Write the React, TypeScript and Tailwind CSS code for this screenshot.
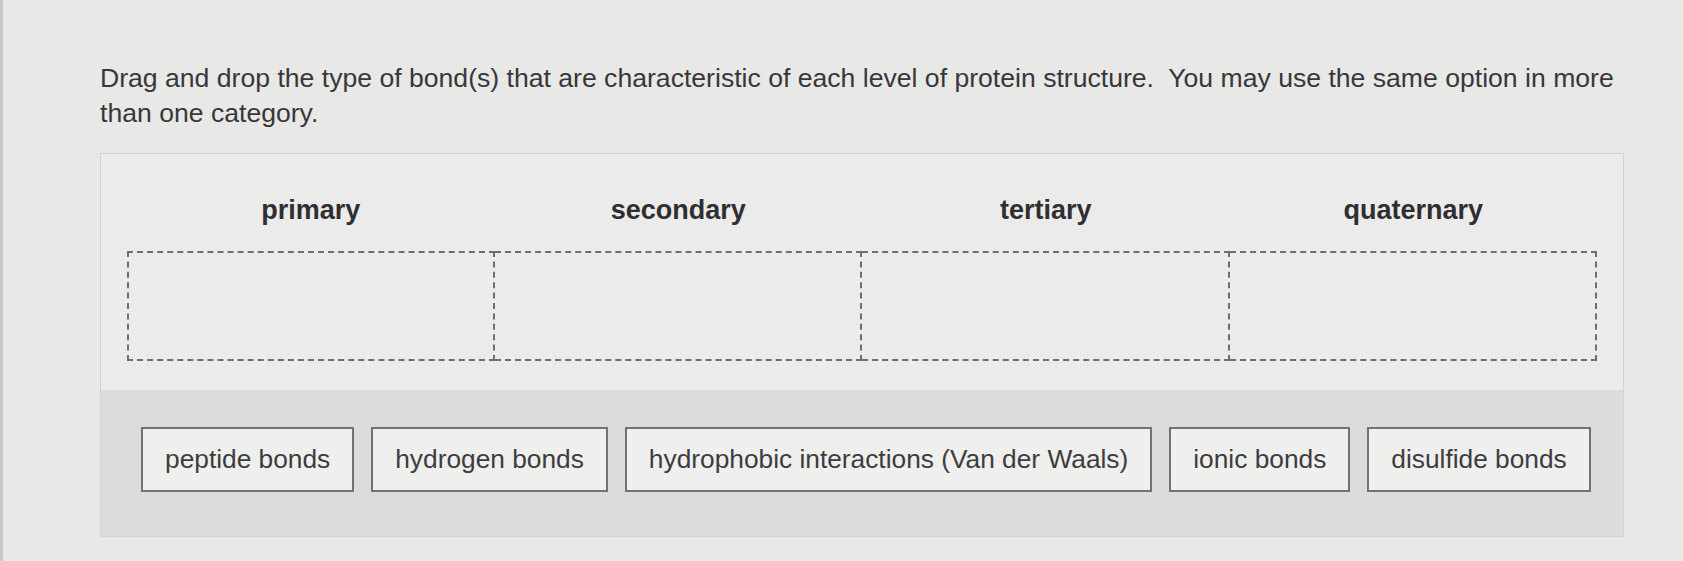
const levels = ["primary", "secondary", "tertiary", "quaternary"];

const options = [
  "peptide bonds",
  "hydrogen bonds",
  "hydrophobic interactions (Van der Waals)",
  "ionic bonds",
  "disulfide bonds",
];

export default function App() {
  return (
    <div className="min-h-screen border-l-[3px] border-[#c8c8c6] bg-[#e8e8e6] pl-[97px] pt-[61px] font-['Liberation_Sans',Arial,sans-serif] text-[#38373b]">
      <p className="w-[1530px] text-[26.6px] leading-[35px]">
        Drag and drop the type of bond(s) that are characteristic of each level of protein structure.&nbsp; You may use
        the same option in more than one category.
      </p>

      <div className="mt-[22px] w-[1524px] border border-[#d2d2d0] bg-[#ebebe9]">
        <div className="px-[26px] pt-[40px]">
          <div className="grid grid-cols-4">
            {levels.map((level) => (
              <div key={level} className="text-center text-[27px] font-bold leading-[32px] text-[#2f2e33]">
                {level}
              </div>
            ))}
          </div>

          <div className="mt-[25px] grid grid-cols-4">
            {levels.map((level, i) => (
              <div
                key={level}
                className={`h-[110px] border-2 border-dashed border-[#6e6e6e] ${i > 0 ? "border-l-0" : ""}`}
              />
            ))}
          </div>
        </div>

        <div className="mt-[29px] flex gap-[17px] bg-[#dcdcda] px-[40px] pb-[44px] pt-[37px]">
          {options.map((opt) => (
            <div
              key={opt}
              className="whitespace-nowrap border-2 border-[#727272] bg-[#efefed] px-[22px] py-[15px] text-[26.3px] leading-[31px] text-[#3d3c40]"
            >
              {opt}
            </div>
          ))}
        </div>
      </div>
    </div>
  );
}
